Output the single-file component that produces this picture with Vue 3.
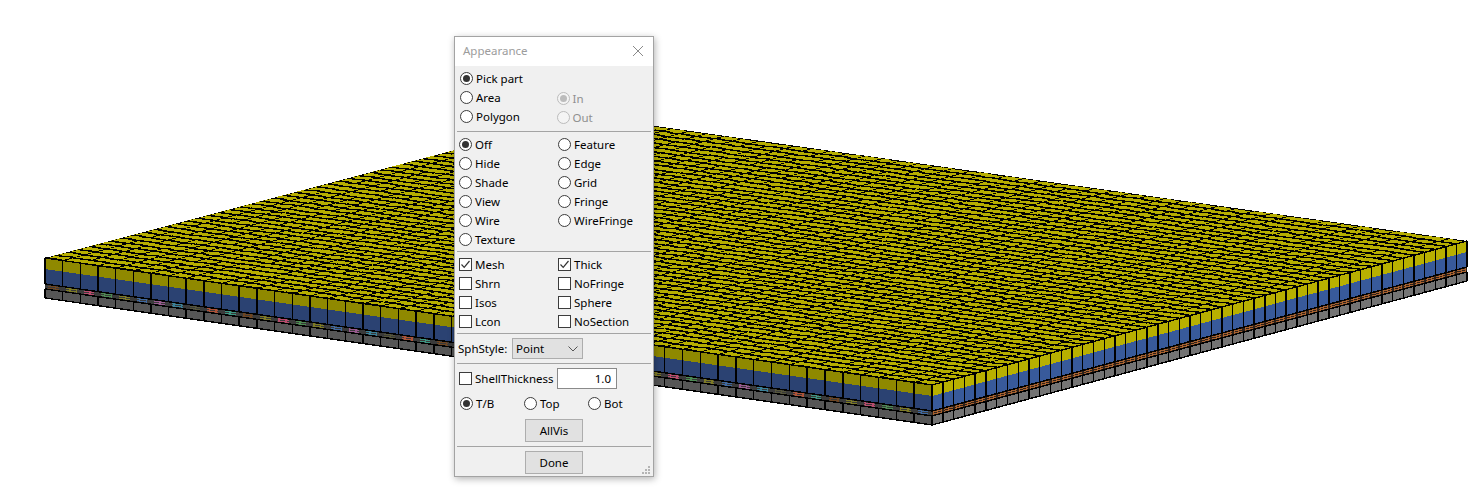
<script setup>
const L = [45, 258], F = [932, 385], R = [1467, 241], B = [584, 116]
const N = 50

const dx1 = F[0] - R[0], dx2 = B[0] - R[0], sx = L[0] - F[0] + R[0] - B[0]
const dy1 = F[1] - R[1], dy2 = B[1] - R[1], sy = L[1] - F[1] + R[1] - B[1]
const den = dx1 * dy2 - dx2 * dy1
const g = (sx * dy2 - dx2 * sy) / den
const h = (dx1 * sy - sx * dy1) / den
const a = F[0] - L[0] + g * F[0], b = B[0] - L[0] + h * B[0]
const d = F[1] - L[1] + g * F[1], e = B[1] - L[1] + h * B[1]

function project(u, v) {
  const w = g * u + h * v + 1
  return [(a * u + b * v + L[0]) / w, (d * u + e * v + L[1]) / w]
}
function unproject(x, y) {
  const m11 = a - g * x, m12 = b - h * x, r1 = x - L[0]
  const m21 = d - g * y, m22 = e - h * y, r2 = y - L[1]
  const det = m11 * m22 - m12 * m21
  return [(r1 * m22 - m12 * r2) / det, (m11 * r2 - r1 * m21) / det]
}
const fmt = (p, z = 0) => `${p[0].toFixed(1)} ${(p[1] + z).toFixed(1)}`

// Stable pseudo-random value per mesh segment, in 0..1.
function noise(i, j) {
  const s = Math.sin(i * 127.1 + j * 311.7) * 43758.5453
  return s - Math.floor(s)
}

// The mesh is viewed at a grazing angle, so its lines break up into irregular horizontal dashes.
const gapAcross = 7.3
const gapAlong = 4.4
let dashes = ''
for (let y = 116; y < 386; y++) {
  let start = -1
  for (let x = 45; x <= 1468; x++) {
    const [u, v] = unproject(x, y + 0.5)
    const inside = u >= 0 && u <= 1 && v >= 0 && v <= 1
    let black = false
    if (inside) {
      const un = u * N
      const vn = v * N
      const j = Math.round(vn)
      const seg = Math.floor(un * 2)
      const along = (vn - j) * gapAlong + (noise(seg, j) - 0.5) * 0.8
      const k = Math.round(un)
      const seg2 = Math.floor(vn)
      const across = (un - k) * gapAcross
      black = Math.abs(along) < 0.75 ||
        (noise(k + 91, seg2) < 0.85 && Math.abs(across) < 0.45)
    }
    if (black && start < 0) start = x
    if (!black && start >= 0) {
      dashes += `M${start} ${y}h${x - start}v1h${start - x}z`
      start = -1
    }
  }
}
const topFace = [L, F, R, B].map(p => fmt(p)).join(' ')

const band = (p, q, z1, z2) => `${fmt(p, z1)} ${fmt(q, z1)} ${fmt(q, z2)} ${fmt(p, z2)}`
const bands = [
  { cls: 'yellow', z1: 0, z2: 11 },
  { cls: 'blue', z1: 11, z2: 26 },
  { cls: 'strip', z1: 26, z2: 31 },
  { cls: 'gray', z1: 31, z2: 40 }
]
const leftFace = bands.map(x => ({ cls: x.cls, points: band(L, F, x.z1, x.z2) }))
const rightFace = bands.map(x => ({ cls: x.cls, points: band(F, R, x.z1, x.z2) }))

let leftGrid = ''
let rightGrid = ''
for (let i = 0; i <= N; i++) {
  const p = project(i / N, 0)
  const q = project(1, i / N)
  leftGrid += `M${fmt(p, 0)}L${fmt(p, 26)}M${fmt(p, 31)}L${fmt(p, 40)}`
  rightGrid += `M${fmt(q, 0)}L${fmt(q, 26)}M${fmt(q, 31)}L${fmt(q, 40)}`
}
const edges = `M${fmt(L, 0)}L${fmt(F, 0)}L${fmt(R, 0)}M${fmt(L, 26)}L${fmt(F, 26)}L${fmt(R, 26)}M${fmt(L, 31)}L${fmt(F, 31)}L${fmt(R, 31)}M${fmt(L, 40)}L${fmt(F, 40)}L${fmt(R, 40)}`

const palette = ['#6e4522', '#7d7a25', '#b84a6c', '#4c8a52', '#7d7a25', '#3f689f', '#985a8e', '#3a8098', '#55553a', '#ad5238', '#3c9682']
const slivers = []
for (let i = 0; i < N; i++) {
  const p = project((i + 0.2) / N, 0)
  const q = project((i + 0.8) / N, 0)
  const stroke = palette[i % palette.length]
  slivers.push({ d: `M${fmt(p, 27.5)}L${fmt(q, 27.5)}M${fmt(p, 29.5)}L${fmt(q, 29.5)}`, stroke })
}
let brown = ''
for (let i = 0; i < N; i++) {
  const p = project(1, (i + 0.1) / N)
  const q = project(1, (i + 0.9) / N)
  brown += `M${fmt(p, 27.5)}L${fmt(q, 27.5)}M${fmt(p, 29.5)}L${fmt(q, 29.5)}`
}

const modes = [
  { label: 'Off', on: true }, { label: 'Feature' },
  { label: 'Hide' }, { label: 'Edge' },
  { label: 'Shade' }, { label: 'Grid' },
  { label: 'View' }, { label: 'Fringe' },
  { label: 'Wire' }, { label: 'WireFringe' },
  { label: 'Texture' }
]
const checks = [
  { label: 'Mesh', on: true }, { label: 'Thick', on: true },
  { label: 'Shrn' }, { label: 'NoFringe' },
  { label: 'Isos' }, { label: 'Sphere' },
  { label: 'Lcon' }, { label: 'NoSection' }
]
const grip = [[6, 0], [3, 3], [6, 3], [0, 6], [3, 6], [6, 6]]
</script>

<template>
  <div class="stage">
    <svg class="mesh" width="1484" height="500" viewBox="0 0 1484 500">
      <polygon class="top" :points="topFace" />
      <path class="dashes" :d="dashes" />
      <g class="left">
        <polygon v-for="f in leftFace" :key="f.cls" :class="f.cls" :points="f.points" />
      </g>
      <g class="right">
        <polygon v-for="f in rightFace" :key="f.cls" :class="f.cls" :points="f.points" />
      </g>
      <path v-for="(s, i) in slivers" :key="i" class="sliver" :d="s.d" :stroke="s.stroke" />
      <path class="sliver brown" :d="brown" />
      <path class="lines" :d="leftGrid" />
      <path class="lines" :d="rightGrid" />
      <path class="lines" :d="edges" />
    </svg>

    <section class="dialog">
      <header class="title">
        <span>Appearance</span>
        <svg class="close" width="12" height="12" viewBox="0 0 12 12">
          <path d="M1 1L11 11M11 1L1 11" />
        </svg>
      </header>

      <div class="sec sec-pick">
        <div class="col">
          <label class="opt"><i class="radio on"></i>Pick part</label>
          <label class="opt"><i class="radio"></i>Area</label>
          <label class="opt"><i class="radio"></i>Polygon</label>
        </div>
        <div class="col col-off">
          <label class="opt off"><i class="radio on"></i>In</label>
          <label class="opt off"><i class="radio"></i>Out</label>
        </div>
      </div>
      <hr class="sep" />

      <div class="sec sec-grid">
        <label v-for="m in modes" :key="m.label" class="opt tight">
          <i class="radio" :class="{ on: m.on }"></i>{{ m.label }}
        </label>
      </div>
      <hr class="sep" />

      <div class="sec sec-grid">
        <label v-for="c in checks" :key="c.label" class="opt tight">
          <i class="check">
            <svg v-if="c.on" width="11" height="11" viewBox="0 0 11 11"><path d="M1.5 5.5L4.2 8.3L9.5 2" /></svg>
          </i>{{ c.label }}
        </label>
      </div>
      <hr class="sep" />

      <div class="sec sec-sph">
        <span class="sph-label">SphStyle:</span>
        <div class="select">
          <span>Point</span>
          <svg width="10" height="6" viewBox="0 0 10 6"><path d="M0.5 0.5L5 5L9.5 0.5" /></svg>
        </div>
      </div>
      <hr class="sep" />

      <div class="sec sec-shell">
        <div class="shell-row">
          <label class="opt tight shell-label"><i class="check"></i>ShellThickness</label>
          <div class="input">1.0</div>
        </div>
        <div class="tb-row">
          <label class="opt"><i class="radio on"></i>T/B</label>
          <label class="opt"><i class="radio"></i>Top</label>
          <label class="opt"><i class="radio"></i>Bot</label>
        </div>
        <button class="btn">AllVis</button>
      </div>
      <hr class="sep" />

      <div class="sec sec-done">
        <button class="btn">Done</button>
      </div>

      <svg class="grip" width="8" height="8" viewBox="0 0 8 8">
        <rect v-for="(p, i) in grip" :key="i" :x="p[0]" :y="p[1]" width="2" height="2" />
      </svg>
    </section>
  </div>
</template>

<style>
html, body { margin: 0; background: #fff; }
</style>

<style scoped>
.stage {
  position: relative;
  width: 1484px;
  height: 500px;
  overflow: hidden;
  background: #fff;
}
.mesh { display: block; shape-rendering: crispEdges; }
.top { fill: #b6ae00; }
.dashes { fill: #000; }
.lines { fill: none; stroke: #000; stroke-width: 1.4; }
.sliver { fill: none; stroke-width: 1.2; }
.brown { stroke: #a5602f; }
.left .yellow { fill: #8f8900; }
.left .blue { fill: #2b4272; }
.left .strip { fill: #3a3a3a; }
.left .gray { fill: #565656; }
.right .yellow { fill: #b8b000; }
.right .blue { fill: #385a9b; }
.right .strip { fill: #2e2118; }
.right .gray { fill: #747474; }

.dialog {
  position: absolute;
  left: 454px;
  top: 36px;
  width: 200px;
  height: 441px;
  box-sizing: border-box;
  border: 1px solid #a3a3a3;
  background: #f0f0f0;
  box-shadow: 1px 2px 7px rgba(0, 0, 0, 0.3);
  font: 11.5px/19px "Noto Sans", "Open Sans", sans-serif;
  color: #000;
}
.title {
  box-sizing: border-box;
  height: 29px;
  background: #fff;
  display: flex;
  align-items: center;
  justify-content: space-between;
  padding: 0 9px 2px 8px;
  color: #9c9c9c;
}
.close path { stroke: #8a8a8a; fill: none; stroke-width: 1; }
.sep {
  display: block;
  height: 1px;
  margin: 0 2px;
  border: 0;
  background: #a4a4a4;
}
.sec { box-sizing: border-box; }
.opt { display: flex; align-items: center; height: 19px; white-space: nowrap; }
.opt.off { color: #8f8f8f; }
.radio {
  box-sizing: border-box;
  width: 13px;
  height: 13px;
  margin-right: 3px;
  border: 1px solid #3c3c3c;
  border-radius: 50%;
  background: #fff;
  display: inline-flex;
  align-items: center;
  justify-content: center;
  flex: none;
}
.radio.on::after {
  content: "";
  width: 7px;
  height: 7px;
  border-radius: 50%;
  background: #333;
}
.off .radio { border-color: #bcbcbc; background: #f4f4f4; }
.off .radio.on::after { background: #bcbcbc; }
.check {
  box-sizing: border-box;
  width: 13px;
  height: 13px;
  margin-right: 3px;
  border: 1px solid #3c3c3c;
  background: #fff;
  display: inline-flex;
  align-items: center;
  justify-content: center;
  flex: none;
}
.check path { fill: none; stroke: #333; stroke-width: 1.2; }

.sec-pick {
  display: flex;
  height: 65px;
  padding: 3px 0 0 5px;
}
.col { width: 98px; }
.col-off { margin-top: 20px; }
.sec-grid {
  display: grid;
  grid-template-columns: 99px 1fr;
  padding: 3px 0 2px 4px;
}
.sec-sph {
  display: flex;
  align-items: center;
  height: 29px;
  padding: 0 0 0 3px;
}
.sph-label { width: 54px; }
.select {
  box-sizing: border-box;
  width: 71px;
  height: 21px;
  padding: 0 4px 0 3px;
  display: flex;
  align-items: center;
  justify-content: space-between;
  background: #e1e1e1;
  border: 1px solid #adadad;
}
.select path { fill: none; stroke: #555; stroke-width: 1; }
.sec-shell {
  display: flex;
  flex-direction: column;
  padding: 4px 0 4px 4px;
}
.shell-row { display: flex; align-items: center; height: 21px; }
.shell-label { width: 98px; }
.input {
  box-sizing: border-box;
  width: 60px;
  height: 21px;
  padding-right: 5px;
  line-height: 19px;
  text-align: right;
  background: #fff;
  border: 1px solid #8a8a8a;
}
.tb-row {
  display: grid;
  grid-template-columns: 64px 64px 1fr;
  margin: 5px 0 6px 1px;
}
.btn {
  box-sizing: border-box;
  display: block;
  width: 58px;
  height: 23px;
  padding: 0;
  margin: 0 auto;
  font: inherit;
  color: inherit;
  background: #e1e1e1;
  border: 1px solid #adadad;
}
.sec-shell .btn { margin: 0 0 0 66px; }
.sec-done { padding: 4px 0 0 70px; }
.sec-done .btn { margin: 0; }
.grip { position: absolute; right: 3px; bottom: 2px; }
.grip rect { fill: #b4b4b4; }
</style>
